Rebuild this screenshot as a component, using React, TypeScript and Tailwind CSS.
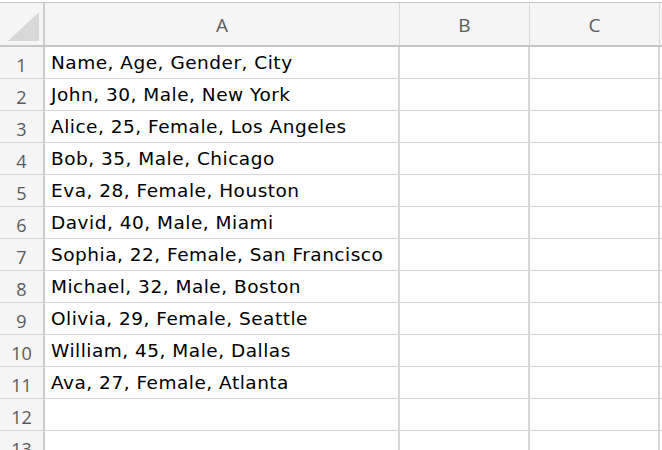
const rows = [
  "Name, Age, Gender, City",
  "John, 30, Male, New York",
  "Alice, 25, Female, Los Angeles",
  "Bob, 35, Male, Chicago",
  "Eva, 28, Female, Houston",
  "David, 40, Male, Miami",
  "Sophia, 22, Female, San Francisco",
  "Michael, 32, Male, Boston",
  "Olivia, 29, Female, Seattle",
  "William, 45, Male, Dallas",
  "Ava, 27, Female, Atlanta",
  "",
  "",
];

export default function App() {
  return (
    <div className="w-[662px] h-[450px] overflow-hidden bg-white font-['Open_Sans',sans-serif]">
      <div className="h-[2px] bg-white" />
      {/* column headers */}
      <div className="flex h-[45px] bg-[#f5f5f5] border-t border-b-2 border-[#c6c6c6]">
        <div className="w-[45px] shrink-0 border-r-2 border-[#cdcdcd] flex items-end justify-end pr-[4px] pb-[4px]">
          <svg width="31" height="29" viewBox="0 0 31 29">
            <polygon points="31,0 31,29 0,29" fill="#d8d8d8" />
          </svg>
        </div>
        {["A", "B", "C"].map((c, i) => (
          <div
            key={c}
            className={`${i === 0 ? "w-[355px]" : "w-[130px]"} shrink-0 border-r border-[#dadada] flex items-center justify-center pt-[2px] text-[19px] leading-none text-[#5b5b5b]`}
          >
            {c}
          </div>
        ))}
        <div className="flex-1" />
      </div>
      {/* rows */}
      {rows.map((text, i) => (
        <div key={i} className="flex h-[32px] border-b border-[#d6d6d6]">
          <div className="w-[45px] shrink-0 border-r-2 border-[#cdcdcd] bg-[#f5f5f5] flex items-end justify-center pb-[4px] text-[18px] leading-none text-[#5b5b5b]">
            {i + 1}
          </div>
          <div className="w-[355px] shrink-0 border-r-2 border-[#d6d6d6] flex items-center pl-[6px] pt-[1px] font-['DejaVu_Sans',sans-serif] text-[18.5px] leading-none tracking-[0.5px] text-black whitespace-nowrap">
            {text}
          </div>
          <div className="w-[130px] shrink-0 border-r-2 border-[#d6d6d6]" />
          <div className="w-[130px] shrink-0 border-r-2 border-[#d6d6d6]" />
          <div className="flex-1" />
        </div>
      ))}
    </div>
  );
}
